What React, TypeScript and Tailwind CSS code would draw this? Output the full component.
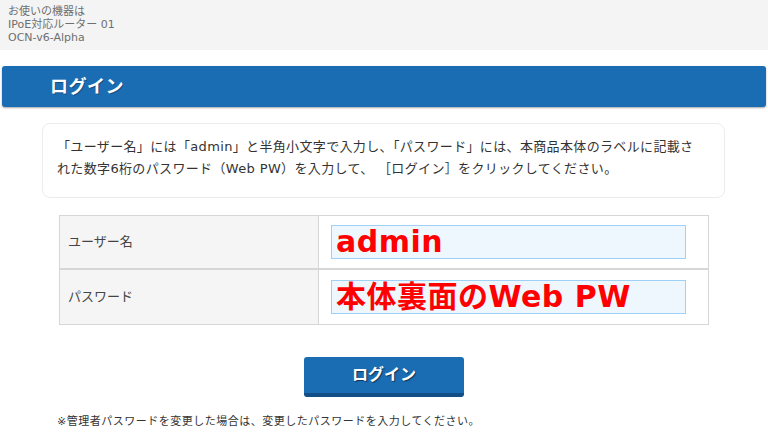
import React from 'react';

const jp = { fontFamily: '"DejaVu Sans", "Noto Sans CJK JP", sans-serif' };

function FieldRow({ label, value, last }: { label: string; value: string; last?: boolean }) {
  return (
    <div className={`flex h-[54px] ${last ? '' : 'border-b-2 border-[#d6d6d6]'}`}>
      <div className="w-[259px] shrink-0 bg-[#f5f5f5] border-r border-[#d6d6d6] flex items-center pl-[8px] text-[13px] text-[#444]">
        {label}
      </div>
      <div className="flex-1 flex items-center pl-[12px]">
        <div className="w-[355px] h-[34px] bg-[#eef6fe] border border-[#9fd0f5] flex items-center pl-[4px] text-[30px] leading-[34px] font-bold text-[#ff0000] tracking-[0.5px] whitespace-nowrap overflow-hidden">
          {value}
        </div>
      </div>
    </div>
  );
}

export default function App() {
  return (
    <div className="w-[768px] h-[432px] bg-white overflow-hidden" style={jp}>
      {/* device info */}
      <div className="h-[50px] bg-[#f4f4f4] pt-[5px] pl-[8px] text-[11px] leading-[13px] text-[#6f6f6f]">
        <div>お使いの機器は</div>
        <div>IPoE対応ルーター 01</div>
        <div>OCN-v6-Alpha</div>
      </div>

      {/* title bar */}
      <div className="mt-[16px] mx-[2px] h-[41px] rounded-[3px] bg-[#1a6db3] shadow-[0_1px_2px_rgba(0,0,0,0.35)] flex items-center pl-[48px]">
        <h1 className="text-[18px] font-bold text-white tracking-[0.5px] [text-shadow:1px_1px_0_rgba(0,0,0,0.3)]">ログイン</h1>
      </div>

      {/* description */}
      <div className="mt-[16px] ml-[42px] w-[683px] rounded-[8px] border border-[#ececec] pt-[12px] pb-[17px] pl-[14px] text-[13px] leading-[22px] text-[#333] tracking-[0.35px] whitespace-nowrap">
        「ユーザー名」には「admin」と半角小文字で入力し、「パスワード」には、本商品本体のラベルに記載さ
        <br />
        れた数字6桁のパスワード（Web PW）を入力して、 ［ログイン］をクリックしてください。
      </div>

      {/* form */}
      <div className="mt-[17px] ml-[59px] w-[650px] border border-[#d6d6d6]">
        <FieldRow label="ユーザー名" value="admin" />
        <FieldRow label="パスワード" value="本体裏面のWeb PW" last />
      </div>

      <div className="mt-[32px] flex justify-center">
        <button className="w-[160px] h-[40px] rounded-[3px] bg-[#1a6db3] border-b-[4px] border-[#124f86] text-[16px] font-bold text-white [text-shadow:1px_1px_1px_rgba(0,0,0,0.5)]">
          ログイン
        </button>
      </div>

      <p className="mt-[18px] ml-[57px] text-[11px] leading-[14px] text-[#333] tracking-[0.5px]">
        ※管理者パスワードを変更した場合は、変更したパスワードを入力してください。
      </p>
    </div>
  );
}
